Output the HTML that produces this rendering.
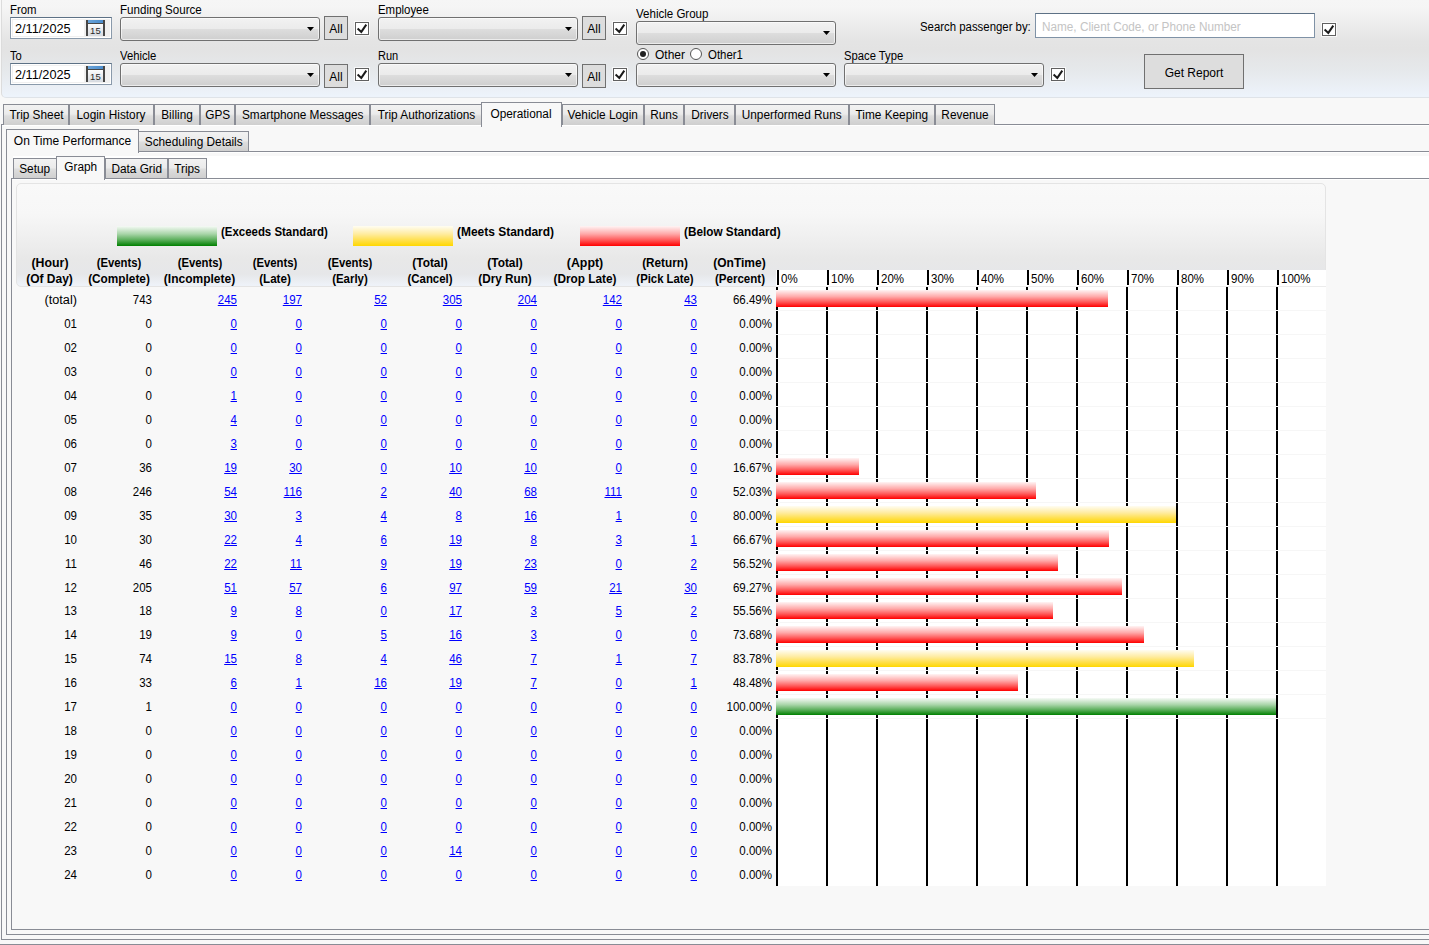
<!DOCTYPE html><html><head><meta charset="utf-8"><style>
*{margin:0;padding:0;box-sizing:content-box;}
html,body{width:1429px;height:945px;overflow:hidden;background:#f8f8f8;font-family:"Liberation Sans", sans-serif;}
body{position:relative;}
.t{position:absolute;white-space:nowrap;line-height:14px;font-size:12px;}
.cb{position:absolute;border:1px solid #707070;border-radius:3px;background:linear-gradient(#f2f2f2 0%,#ebebeb 48%,#dddddd 52%,#cfcfcf 100%);box-shadow:inset 0 0 0 1px rgba(255,255,255,.6);}
.arr{position:absolute;right:5px;top:9px;}
.allb{position:absolute;width:22px;height:22px;border:1px solid #707070;background:#dddddd;font-size:12px;line-height:24px;text-align:center;}
.chk{position:absolute;width:12px;height:11px;border:1px solid #606060;background:#fff;box-shadow:0 0 0 1px rgba(255,255,255,.7);}
.chk svg{position:absolute;left:0;top:0;}
.db{position:absolute;width:100px;height:20px;border:1px solid #8a9aab;border-top-color:#5d7185;background:#f0f0f0;box-shadow:inset 0 0 0 1px #fff;}
.dbw{position:absolute;left:2px;top:2px;width:71px;height:16px;background:#fff;}
.dbt{position:absolute;left:4px;top:4px;font-size:12px;line-height:14px;transform:scaleX(1.06);transform-origin:left 0;}
.cal{position:absolute;left:75px;top:2px;width:15px;height:16px;border-left:2px solid #474747;border-right:2px solid #474747;background:linear-gradient(#ffffff 20%,#d6dae0);}
.calh{position:absolute;left:0;top:0;width:15px;height:3px;background:linear-gradient(90deg,#6aa3d8,#4a8ccc);border-bottom:1px solid #474747;}
.cald{position:absolute;left:0;top:5px;width:15px;text-align:center;font-size:9.5px;line-height:12px;color:#2a2a2a;letter-spacing:0.3px;}
.rad{position:absolute;width:10px;height:10px;border:1px solid #555;border-radius:50%;background:#fff;}
.dot{position:absolute;left:2px;top:2px;width:6px;height:6px;border-radius:50%;background:#222;}
.sb{position:absolute;border:1px solid #7f92a6;border-top-color:#5d7185;background:#fff;}
.sb span{position:absolute;left:6px;top:6px;font-size:12px;line-height:14px;color:#c4c4c4;white-space:nowrap;transform:scaleX(.98);transform-origin:left 0;}
.gr{position:absolute;border:1px solid #707070;background:#dddddd;text-align:center;line-height:37px;font-size:12px;}
.tab{position:absolute;border:1px solid #898c95;border-bottom:none;background:linear-gradient(#f2f2f2 0%,#ebebeb 45%,#dddddd 55%,#cfcfcf 100%);text-align:center;font-size:12px;line-height:21px;white-space:nowrap;}
.tabs{position:absolute;border:1px solid #898c95;border-bottom:none;background:#f8f8f8;text-align:center;font-size:12px;line-height:21px;white-space:nowrap;}
.bar{position:absolute;}
.tab span,.tabs span{display:inline-block;transform:scaleX(.985);}
.bar.g{background:linear-gradient(#f6faf6 0%,#a8d5a8 40%,#5aae5a 70%,#008000 100%);}
.bar.y{background:linear-gradient(#fffdf2 0%,#ffeca0 40%,#ffe050 70%,#ffd700 100%);}
.bar.r{background:linear-gradient(#fff4f4 0%,#ffa8a8 40%,#ff5a5a 70%,#ff0000 100%);}
u{text-decoration:underline;}
</style></head><body><div style="position:absolute;left:1px;top:0;width:1440px;height:97px;border-left:1px solid #dcdcdc;border-bottom:1px solid #dfe3e8;border-bottom-left-radius:5px;background:linear-gradient(#f6f6f6 0px,#f5f5f5 8px,#e4e4e4 42px,#e3e3e3 50px,#e6e9ec 72px,#edf3fb 96px);"></div>
<div class="t" style="left:10px;top:3.00px;font-size:12px;color:#000;transform:scaleX(0.946);transform-origin:left 0;">From</div>
<div class="db" style="left:10px;top:17px;"><div class="dbw"></div><div class="dbt">2/11/2025</div><div class="cal"><div class="calh"></div><div class="cald">15</div></div></div>
<div class="t" style="left:10px;top:49.00px;font-size:12px;color:#000;transform:scaleX(0.93);transform-origin:left 0;">To</div>
<div class="db" style="left:10px;top:63px;"><div class="dbw"></div><div class="dbt">2/11/2025</div><div class="cal"><div class="calh"></div><div class="cald">15</div></div></div>
<div class="t" style="left:120px;top:3.00px;font-size:12px;color:#000;transform:scaleX(0.965);transform-origin:left 0;">Funding Source</div>
<div class="cb" style="left:120px;top:17px;width:198px;height:22px;"><svg class="arr" width="7" height="4" viewBox="0 0 7 4"><path d="M0 0H7L3.5 4Z" fill="#000"/></svg></div>
<div class="allb" style="left:324px;top:16px;">All</div>
<div class="chk" style="left:355px;top:22px;"><svg width="12" height="11" viewBox="0 0 12 11"><path d="M1.6 5.6 L5.3 8.9 L10.3 1.6" fill="none" stroke="#1a1a1a" stroke-width="2.0"/></svg></div>
<div class="t" style="left:120px;top:49.00px;font-size:12px;color:#000;transform:scaleX(0.94);transform-origin:left 0;">Vehicle</div>
<div class="cb" style="left:120px;top:63px;width:198px;height:22px;"><svg class="arr" width="7" height="4" viewBox="0 0 7 4"><path d="M0 0H7L3.5 4Z" fill="#000"/></svg></div>
<div class="allb" style="left:324px;top:64px;">All</div>
<div class="chk" style="left:355px;top:68px;"><svg width="12" height="11" viewBox="0 0 12 11"><path d="M1.6 5.6 L5.3 8.9 L10.3 1.6" fill="none" stroke="#1a1a1a" stroke-width="2.0"/></svg></div>
<div class="t" style="left:378px;top:3.00px;font-size:12px;color:#000;transform:scaleX(0.952);transform-origin:left 0;">Employee</div>
<div class="cb" style="left:378px;top:17px;width:198px;height:22px;"><svg class="arr" width="7" height="4" viewBox="0 0 7 4"><path d="M0 0H7L3.5 4Z" fill="#000"/></svg></div>
<div class="allb" style="left:582px;top:16px;">All</div>
<div class="chk" style="left:613px;top:22px;"><svg width="12" height="11" viewBox="0 0 12 11"><path d="M1.6 5.6 L5.3 8.9 L10.3 1.6" fill="none" stroke="#1a1a1a" stroke-width="2.0"/></svg></div>
<div class="t" style="left:378px;top:49.00px;font-size:12px;color:#000;transform:scaleX(0.92);transform-origin:left 0;">Run</div>
<div class="cb" style="left:378px;top:63px;width:198px;height:22px;"><svg class="arr" width="7" height="4" viewBox="0 0 7 4"><path d="M0 0H7L3.5 4Z" fill="#000"/></svg></div>
<div class="allb" style="left:582px;top:64px;">All</div>
<div class="chk" style="left:613px;top:68px;"><svg width="12" height="11" viewBox="0 0 12 11"><path d="M1.6 5.6 L5.3 8.9 L10.3 1.6" fill="none" stroke="#1a1a1a" stroke-width="2.0"/></svg></div>
<div class="t" style="left:636px;top:7.00px;font-size:12px;color:#000;transform:scaleX(0.961);transform-origin:left 0;">Vehicle Group</div>
<div class="cb" style="left:636px;top:21px;width:198px;height:22px;"><svg class="arr" width="7" height="4" viewBox="0 0 7 4"><path d="M0 0H7L3.5 4Z" fill="#000"/></svg></div>
<div class="rad" style="left:637px;top:48px;"><div class="dot"></div></div>
<div class="t" style="left:655px;top:47.60px;font-size:12px;color:#000;">Other</div>
<div class="rad" style="left:690px;top:48px;"></div>
<div class="t" style="left:708px;top:47.60px;font-size:12px;color:#000;transform:scaleX(0.951);transform-origin:left 0;">Other1</div>
<div class="cb" style="left:636px;top:63px;width:198px;height:22px;"><svg class="arr" width="7" height="4" viewBox="0 0 7 4"><path d="M0 0H7L3.5 4Z" fill="#000"/></svg></div>
<div class="t" style="left:844px;top:49.00px;font-size:12px;color:#000;transform:scaleX(0.937);transform-origin:left 0;">Space Type</div>
<div class="cb" style="left:844px;top:63px;width:198px;height:22px;"><svg class="arr" width="7" height="4" viewBox="0 0 7 4"><path d="M0 0H7L3.5 4Z" fill="#000"/></svg></div>
<div class="chk" style="left:1051px;top:68px;"><svg width="12" height="11" viewBox="0 0 12 11"><path d="M1.6 5.6 L5.3 8.9 L10.3 1.6" fill="none" stroke="#1a1a1a" stroke-width="2.0"/></svg></div>
<div class="t" style="left:920px;top:19.60px;font-size:12px;color:#000;transform:scaleX(0.949);transform-origin:left 0;">Search passenger by:</div>
<div class="sb" style="left:1035px;top:13px;width:278px;height:23px;"><span>Name, Client Code, or Phone Number</span></div>
<div class="chk" style="left:1322px;top:23px;"><svg width="12" height="11" viewBox="0 0 12 11"><path d="M1.6 5.6 L5.3 8.9 L10.3 1.6" fill="none" stroke="#1a1a1a" stroke-width="2.0"/></svg></div>
<div class="gr" style="left:1144px;top:54px;width:98px;height:33px;">Get Report</div>
<div style="position:absolute;left:0;top:944px;width:1429px;height:1px;background:#898c95;"></div>
<div style="position:absolute;left:1px;top:124px;width:1440px;height:814px;border:1px solid #898c95;border-right:none;background:#f8f8f8;"></div>
<div style="position:absolute;left:2px;top:125px;width:1440px;height:1px;background:#fff;"></div>
<div class="tab" style="left:3px;top:104px;width:64px;height:20px;"><span>Trip Sheet</span></div>
<div class="tab" style="left:69px;top:104px;width:83px;height:20px;"><span>Login History</span></div>
<div class="tab" style="left:154px;top:104px;width:44px;height:20px;"><span>Billing</span></div>
<div class="tab" style="left:200px;top:104px;width:33px;height:20px;"><span>GPS</span></div>
<div class="tab" style="left:235px;top:104px;width:133px;height:20px;"><span>Smartphone Messages</span></div>
<div class="tab" style="left:370px;top:104px;width:110px;height:20px;"><span>Trip Authorizations</span></div>
<div class="tab" style="left:562px;top:104px;width:80px;height:20px;"><span>Vehicle Login</span></div>
<div class="tab" style="left:644px;top:104px;width:38px;height:20px;"><span>Runs</span></div>
<div class="tab" style="left:684px;top:104px;width:49px;height:20px;"><span>Drivers</span></div>
<div class="tab" style="left:735px;top:104px;width:112px;height:20px;"><span>Unperformed Runs</span></div>
<div class="tab" style="left:849px;top:104px;width:84px;height:20px;"><span>Time Keeping</span></div>
<div class="tab" style="left:935px;top:104px;width:58px;height:20px;"><span>Revenue</span></div>
<div class="tabs" style="left:481px;top:102px;width:79px;height:23px;padding-top:1px;"><span>Operational</span></div>
<div style="position:absolute;left:6px;top:151px;width:1440px;height:782px;border:1px solid #898c95;border-right:none;background:#f8f8f8;"></div>
<div style="position:absolute;left:7px;top:152px;width:1440px;height:1px;background:#fff;"></div>
<div class="tab" style="left:138px;top:131px;width:109px;height:19px;"><span>Scheduling Details</span></div>
<div class="tabs" style="left:6px;top:129px;width:131px;height:22px;padding-top:1px;"><span style="transform:none">On Time Performance</span></div>
<div style="position:absolute;left:13px;top:156px;width:1440px;height:22px;background:#fff;"></div>
<div style="position:absolute;left:11px;top:178px;width:1440px;height:750px;border:1px solid #898c95;border-right:none;background:#f8f8f8;"></div>
<div style="position:absolute;left:12px;top:179px;width:1440px;height:1px;background:#fff;"></div>
<div class="tab" style="left:13px;top:158px;width:42px;height:19px;"><span>Setup</span></div>
<div class="tab" style="left:105px;top:158px;width:61px;height:19px;"><span>Data Grid</span></div>
<div class="tab" style="left:168px;top:158px;width:37px;height:19px;"><span>Trips</span></div>
<div class="tabs" style="left:56px;top:156px;width:47px;height:23px;"><span>Graph</span></div>
<div style="position:absolute;left:16px;top:183px;width:1308px;height:102px;border:1px solid #e4e4e4;border-radius:5px;background:linear-gradient(#f9f9f9 0px,#f7f7f7 30px,#e8e8e8 75px,#e6e7e9 90px,#eef2f8 101px);"></div>
<div class="bar g" style="left:117px;top:226px;width:100px;height:20px;"></div>
<div class="t" style="left:221px;top:225.40px;font-size:12px;font-weight:bold;color:#000;transform:scaleX(0.953);transform-origin:left 0;">(Exceeds Standard)</div>
<div class="bar y" style="left:353px;top:226px;width:100px;height:20px;"></div>
<div class="t" style="left:457px;top:225.40px;font-size:12px;font-weight:bold;color:#000;transform:scaleX(0.997);transform-origin:left 0;">(Meets Standard)</div>
<div class="bar r" style="left:580px;top:226px;width:100px;height:20px;"></div>
<div class="t" style="left:684px;top:225.40px;font-size:12px;font-weight:bold;color:#000;transform:scaleX(0.98);transform-origin:left 0;">(Below Standard)</div>
<div class="t" style="left:-10.5px;width:120px;text-align:center;top:256.30px;font-size:12px;font-weight:bold;color:#000;transform:scaleX(1.028);transform-origin:center 0;">(Hour)</div>
<div class="t" style="left:-10.5px;width:120px;text-align:center;top:271.80px;font-size:12px;font-weight:bold;color:#000;">(Of Day)</div>
<div class="t" style="left:59.0px;width:120px;text-align:center;top:256.30px;font-size:12px;font-weight:bold;color:#000;transform:scaleX(0.943);transform-origin:center 0;">(Events)</div>
<div class="t" style="left:59.0px;width:120px;text-align:center;top:271.80px;font-size:12px;font-weight:bold;color:#000;transform:scaleX(0.984);transform-origin:center 0;">(Complete)</div>
<div class="t" style="left:139.5px;width:120px;text-align:center;top:256.30px;font-size:12px;font-weight:bold;color:#000;transform:scaleX(0.943);transform-origin:center 0;">(Events)</div>
<div class="t" style="left:139.5px;width:120px;text-align:center;top:271.80px;font-size:12px;font-weight:bold;color:#000;">(Incomplete)</div>
<div class="t" style="left:214.5px;width:120px;text-align:center;top:256.30px;font-size:12px;font-weight:bold;color:#000;transform:scaleX(0.943);transform-origin:center 0;">(Events)</div>
<div class="t" style="left:214.5px;width:120px;text-align:center;top:271.80px;font-size:12px;font-weight:bold;color:#000;transform:scaleX(0.97);transform-origin:center 0;">(Late)</div>
<div class="t" style="left:289.5px;width:120px;text-align:center;top:256.30px;font-size:12px;font-weight:bold;color:#000;transform:scaleX(0.943);transform-origin:center 0;">(Events)</div>
<div class="t" style="left:289.5px;width:120px;text-align:center;top:271.80px;font-size:12px;font-weight:bold;color:#000;transform:scaleX(0.954);transform-origin:center 0;">(Early)</div>
<div class="t" style="left:369.5px;width:120px;text-align:center;top:256.30px;font-size:12px;font-weight:bold;color:#000;transform:scaleX(0.989);transform-origin:center 0;">(Total)</div>
<div class="t" style="left:369.5px;width:120px;text-align:center;top:271.80px;font-size:12px;font-weight:bold;color:#000;transform:scaleX(0.951);transform-origin:center 0;">(Cancel)</div>
<div class="t" style="left:444.5px;width:120px;text-align:center;top:256.30px;font-size:12px;font-weight:bold;color:#000;transform:scaleX(0.989);transform-origin:center 0;">(Total)</div>
<div class="t" style="left:444.5px;width:120px;text-align:center;top:271.80px;font-size:12px;font-weight:bold;color:#000;transform:scaleX(0.978);transform-origin:center 0;">(Dry Run)</div>
<div class="t" style="left:524.6px;width:120px;text-align:center;top:256.30px;font-size:12px;font-weight:bold;color:#000;transform:scaleX(1.029);transform-origin:center 0;">(Appt)</div>
<div class="t" style="left:524.6px;width:120px;text-align:center;top:271.80px;font-size:12px;font-weight:bold;color:#000;transform:scaleX(0.984);transform-origin:center 0;">(Drop Late)</div>
<div class="t" style="left:604.5px;width:120px;text-align:center;top:256.30px;font-size:12px;font-weight:bold;color:#000;transform:scaleX(0.979);transform-origin:center 0;">(Return)</div>
<div class="t" style="left:604.5px;width:120px;text-align:center;top:271.80px;font-size:12px;font-weight:bold;color:#000;transform:scaleX(0.944);transform-origin:center 0;">(Pick Late)</div>
<div class="t" style="left:679.5px;width:120px;text-align:center;top:256.30px;font-size:12px;font-weight:bold;color:#000;">(OnTime)</div>
<div class="t" style="left:679.5px;width:120px;text-align:center;top:271.80px;font-size:12px;font-weight:bold;color:#000;transform:scaleX(0.962);transform-origin:center 0;">(Percent)</div>
<div style="position:absolute;left:776px;top:270px;width:550px;height:16px;background:#fff;"></div>
<div style="position:absolute;left:776px;top:286px;width:550px;height:1px;background:#ececec;"></div>
<div style="position:absolute;left:777px;top:270px;width:2px;height:15px;background:#000;"></div>
<div class="t" style="left:781px;top:271.50px;font-size:12px;color:#000;transform:scaleX(0.96);transform-origin:left 0;">0%</div>
<div style="position:absolute;left:827px;top:270px;width:2px;height:15px;background:#000;"></div>
<div class="t" style="left:831px;top:271.50px;font-size:12px;color:#000;transform:scaleX(0.96);transform-origin:left 0;">10%</div>
<div style="position:absolute;left:877px;top:270px;width:2px;height:15px;background:#000;"></div>
<div class="t" style="left:881px;top:271.50px;font-size:12px;color:#000;transform:scaleX(0.96);transform-origin:left 0;">20%</div>
<div style="position:absolute;left:927px;top:270px;width:2px;height:15px;background:#000;"></div>
<div class="t" style="left:931px;top:271.50px;font-size:12px;color:#000;transform:scaleX(0.96);transform-origin:left 0;">30%</div>
<div style="position:absolute;left:977px;top:270px;width:2px;height:15px;background:#000;"></div>
<div class="t" style="left:981px;top:271.50px;font-size:12px;color:#000;transform:scaleX(0.96);transform-origin:left 0;">40%</div>
<div style="position:absolute;left:1027px;top:270px;width:2px;height:15px;background:#000;"></div>
<div class="t" style="left:1031px;top:271.50px;font-size:12px;color:#000;transform:scaleX(0.96);transform-origin:left 0;">50%</div>
<div style="position:absolute;left:1077px;top:270px;width:2px;height:15px;background:#000;"></div>
<div class="t" style="left:1081px;top:271.50px;font-size:12px;color:#000;transform:scaleX(0.96);transform-origin:left 0;">60%</div>
<div style="position:absolute;left:1127px;top:270px;width:2px;height:15px;background:#000;"></div>
<div class="t" style="left:1131px;top:271.50px;font-size:12px;color:#000;transform:scaleX(0.96);transform-origin:left 0;">70%</div>
<div style="position:absolute;left:1177px;top:270px;width:2px;height:15px;background:#000;"></div>
<div class="t" style="left:1181px;top:271.50px;font-size:12px;color:#000;transform:scaleX(0.96);transform-origin:left 0;">80%</div>
<div style="position:absolute;left:1227px;top:270px;width:2px;height:15px;background:#000;"></div>
<div class="t" style="left:1231px;top:271.50px;font-size:12px;color:#000;transform:scaleX(0.96);transform-origin:left 0;">90%</div>
<div style="position:absolute;left:1277px;top:270px;width:2px;height:15px;background:#000;"></div>
<div class="t" style="left:1281px;top:271.50px;font-size:12px;color:#000;transform:scaleX(0.96);transform-origin:left 0;">100%</div>
<div style="position:absolute;left:776px;top:287px;width:550px;height:599px;background:#fff;"></div>
<div style="position:absolute;left:776px;top:287px;width:2px;height:599px;background:#000;"></div>
<div style="position:absolute;left:826px;top:287px;width:2px;height:599px;background:#000;"></div>
<div style="position:absolute;left:876px;top:287px;width:2px;height:599px;background:#000;"></div>
<div style="position:absolute;left:926px;top:287px;width:2px;height:599px;background:#000;"></div>
<div style="position:absolute;left:976px;top:287px;width:2px;height:599px;background:#000;"></div>
<div style="position:absolute;left:1026px;top:287px;width:2px;height:599px;background:#000;"></div>
<div style="position:absolute;left:1076px;top:287px;width:2px;height:599px;background:#000;"></div>
<div style="position:absolute;left:1126px;top:287px;width:2px;height:599px;background:#000;"></div>
<div style="position:absolute;left:1176px;top:287px;width:2px;height:599px;background:#000;"></div>
<div style="position:absolute;left:1226px;top:287px;width:2px;height:599px;background:#000;"></div>
<div style="position:absolute;left:1276px;top:287px;width:2px;height:599px;background:#000;"></div>
<div style="position:absolute;left:776px;top:310px;width:550px;height:1px;background:#f6f6f6;"></div>
<div style="position:absolute;left:776px;top:334px;width:550px;height:1px;background:#f6f6f6;"></div>
<div style="position:absolute;left:776px;top:358px;width:550px;height:1px;background:#f6f6f6;"></div>
<div style="position:absolute;left:776px;top:382px;width:550px;height:1px;background:#f6f6f6;"></div>
<div style="position:absolute;left:776px;top:406px;width:550px;height:1px;background:#f6f6f6;"></div>
<div style="position:absolute;left:776px;top:430px;width:550px;height:1px;background:#f6f6f6;"></div>
<div style="position:absolute;left:776px;top:454px;width:550px;height:1px;background:#f6f6f6;"></div>
<div style="position:absolute;left:776px;top:478px;width:550px;height:1px;background:#f6f6f6;"></div>
<div style="position:absolute;left:776px;top:502px;width:550px;height:1px;background:#f6f6f6;"></div>
<div style="position:absolute;left:776px;top:526px;width:550px;height:1px;background:#f6f6f6;"></div>
<div style="position:absolute;left:776px;top:550px;width:550px;height:1px;background:#f6f6f6;"></div>
<div style="position:absolute;left:776px;top:574px;width:550px;height:1px;background:#f6f6f6;"></div>
<div style="position:absolute;left:776px;top:598px;width:550px;height:1px;background:#f6f6f6;"></div>
<div style="position:absolute;left:776px;top:622px;width:550px;height:1px;background:#f6f6f6;"></div>
<div style="position:absolute;left:776px;top:646px;width:550px;height:1px;background:#f6f6f6;"></div>
<div style="position:absolute;left:776px;top:670px;width:550px;height:1px;background:#f6f6f6;"></div>
<div style="position:absolute;left:776px;top:694px;width:550px;height:1px;background:#f6f6f6;"></div>
<div style="position:absolute;left:776px;top:718px;width:550px;height:1px;background:#f6f6f6;"></div>
<div class="t" style="left:-3px;width:80px;text-align:right;top:293.00px;font-size:12px;color:#000;transform:scaleX(1.06);transform-origin:right 0;">(total)</div>
<div class="t" style="left:92px;width:60px;text-align:right;top:293.00px;font-size:12px;color:#000;transform:scaleX(0.96);transform-origin:right 0;">743</div>
<div class="t" style="left:177px;width:60px;text-align:right;top:293.00px;font-size:12px;color:#0000ff;transform:scaleX(0.96);transform-origin:right 0;"><u>245</u></div>
<div class="t" style="left:242px;width:60px;text-align:right;top:293.00px;font-size:12px;color:#0000ff;transform:scaleX(0.96);transform-origin:right 0;"><u>197</u></div>
<div class="t" style="left:327px;width:60px;text-align:right;top:293.00px;font-size:12px;color:#0000ff;transform:scaleX(0.96);transform-origin:right 0;"><u>52</u></div>
<div class="t" style="left:402px;width:60px;text-align:right;top:293.00px;font-size:12px;color:#0000ff;transform:scaleX(0.96);transform-origin:right 0;"><u>305</u></div>
<div class="t" style="left:477px;width:60px;text-align:right;top:293.00px;font-size:12px;color:#0000ff;transform:scaleX(0.96);transform-origin:right 0;"><u>204</u></div>
<div class="t" style="left:562px;width:60px;text-align:right;top:293.00px;font-size:12px;color:#0000ff;transform:scaleX(0.96);transform-origin:right 0;"><u>142</u></div>
<div class="t" style="left:637px;width:60px;text-align:right;top:293.00px;font-size:12px;color:#0000ff;transform:scaleX(0.96);transform-origin:right 0;"><u>43</u></div>
<div class="t" style="left:712px;width:60px;text-align:right;top:293.00px;font-size:12px;color:#000;transform:scaleX(0.96);transform-origin:right 0;">66.49%</div>
<div class="bar r" style="position:absolute;left:776px;top:290px;width:332px;height:17px;"></div>
<div class="t" style="left:-3px;width:80px;text-align:right;top:317.00px;font-size:12px;color:#000;transform:scaleX(0.96);transform-origin:right 0;">01</div>
<div class="t" style="left:92px;width:60px;text-align:right;top:317.00px;font-size:12px;color:#000;transform:scaleX(0.96);transform-origin:right 0;">0</div>
<div class="t" style="left:177px;width:60px;text-align:right;top:317.00px;font-size:12px;color:#0000ff;transform:scaleX(0.96);transform-origin:right 0;"><u>0</u></div>
<div class="t" style="left:242px;width:60px;text-align:right;top:317.00px;font-size:12px;color:#0000ff;transform:scaleX(0.96);transform-origin:right 0;"><u>0</u></div>
<div class="t" style="left:327px;width:60px;text-align:right;top:317.00px;font-size:12px;color:#0000ff;transform:scaleX(0.96);transform-origin:right 0;"><u>0</u></div>
<div class="t" style="left:402px;width:60px;text-align:right;top:317.00px;font-size:12px;color:#0000ff;transform:scaleX(0.96);transform-origin:right 0;"><u>0</u></div>
<div class="t" style="left:477px;width:60px;text-align:right;top:317.00px;font-size:12px;color:#0000ff;transform:scaleX(0.96);transform-origin:right 0;"><u>0</u></div>
<div class="t" style="left:562px;width:60px;text-align:right;top:317.00px;font-size:12px;color:#0000ff;transform:scaleX(0.96);transform-origin:right 0;"><u>0</u></div>
<div class="t" style="left:637px;width:60px;text-align:right;top:317.00px;font-size:12px;color:#0000ff;transform:scaleX(0.96);transform-origin:right 0;"><u>0</u></div>
<div class="t" style="left:712px;width:60px;text-align:right;top:317.00px;font-size:12px;color:#000;transform:scaleX(0.96);transform-origin:right 0;">0.00%</div>
<div class="t" style="left:-3px;width:80px;text-align:right;top:341.00px;font-size:12px;color:#000;transform:scaleX(0.96);transform-origin:right 0;">02</div>
<div class="t" style="left:92px;width:60px;text-align:right;top:341.00px;font-size:12px;color:#000;transform:scaleX(0.96);transform-origin:right 0;">0</div>
<div class="t" style="left:177px;width:60px;text-align:right;top:341.00px;font-size:12px;color:#0000ff;transform:scaleX(0.96);transform-origin:right 0;"><u>0</u></div>
<div class="t" style="left:242px;width:60px;text-align:right;top:341.00px;font-size:12px;color:#0000ff;transform:scaleX(0.96);transform-origin:right 0;"><u>0</u></div>
<div class="t" style="left:327px;width:60px;text-align:right;top:341.00px;font-size:12px;color:#0000ff;transform:scaleX(0.96);transform-origin:right 0;"><u>0</u></div>
<div class="t" style="left:402px;width:60px;text-align:right;top:341.00px;font-size:12px;color:#0000ff;transform:scaleX(0.96);transform-origin:right 0;"><u>0</u></div>
<div class="t" style="left:477px;width:60px;text-align:right;top:341.00px;font-size:12px;color:#0000ff;transform:scaleX(0.96);transform-origin:right 0;"><u>0</u></div>
<div class="t" style="left:562px;width:60px;text-align:right;top:341.00px;font-size:12px;color:#0000ff;transform:scaleX(0.96);transform-origin:right 0;"><u>0</u></div>
<div class="t" style="left:637px;width:60px;text-align:right;top:341.00px;font-size:12px;color:#0000ff;transform:scaleX(0.96);transform-origin:right 0;"><u>0</u></div>
<div class="t" style="left:712px;width:60px;text-align:right;top:341.00px;font-size:12px;color:#000;transform:scaleX(0.96);transform-origin:right 0;">0.00%</div>
<div class="t" style="left:-3px;width:80px;text-align:right;top:365.00px;font-size:12px;color:#000;transform:scaleX(0.96);transform-origin:right 0;">03</div>
<div class="t" style="left:92px;width:60px;text-align:right;top:365.00px;font-size:12px;color:#000;transform:scaleX(0.96);transform-origin:right 0;">0</div>
<div class="t" style="left:177px;width:60px;text-align:right;top:365.00px;font-size:12px;color:#0000ff;transform:scaleX(0.96);transform-origin:right 0;"><u>0</u></div>
<div class="t" style="left:242px;width:60px;text-align:right;top:365.00px;font-size:12px;color:#0000ff;transform:scaleX(0.96);transform-origin:right 0;"><u>0</u></div>
<div class="t" style="left:327px;width:60px;text-align:right;top:365.00px;font-size:12px;color:#0000ff;transform:scaleX(0.96);transform-origin:right 0;"><u>0</u></div>
<div class="t" style="left:402px;width:60px;text-align:right;top:365.00px;font-size:12px;color:#0000ff;transform:scaleX(0.96);transform-origin:right 0;"><u>0</u></div>
<div class="t" style="left:477px;width:60px;text-align:right;top:365.00px;font-size:12px;color:#0000ff;transform:scaleX(0.96);transform-origin:right 0;"><u>0</u></div>
<div class="t" style="left:562px;width:60px;text-align:right;top:365.00px;font-size:12px;color:#0000ff;transform:scaleX(0.96);transform-origin:right 0;"><u>0</u></div>
<div class="t" style="left:637px;width:60px;text-align:right;top:365.00px;font-size:12px;color:#0000ff;transform:scaleX(0.96);transform-origin:right 0;"><u>0</u></div>
<div class="t" style="left:712px;width:60px;text-align:right;top:365.00px;font-size:12px;color:#000;transform:scaleX(0.96);transform-origin:right 0;">0.00%</div>
<div class="t" style="left:-3px;width:80px;text-align:right;top:389.00px;font-size:12px;color:#000;transform:scaleX(0.96);transform-origin:right 0;">04</div>
<div class="t" style="left:92px;width:60px;text-align:right;top:389.00px;font-size:12px;color:#000;transform:scaleX(0.96);transform-origin:right 0;">0</div>
<div class="t" style="left:177px;width:60px;text-align:right;top:389.00px;font-size:12px;color:#0000ff;transform:scaleX(0.96);transform-origin:right 0;"><u>1</u></div>
<div class="t" style="left:242px;width:60px;text-align:right;top:389.00px;font-size:12px;color:#0000ff;transform:scaleX(0.96);transform-origin:right 0;"><u>0</u></div>
<div class="t" style="left:327px;width:60px;text-align:right;top:389.00px;font-size:12px;color:#0000ff;transform:scaleX(0.96);transform-origin:right 0;"><u>0</u></div>
<div class="t" style="left:402px;width:60px;text-align:right;top:389.00px;font-size:12px;color:#0000ff;transform:scaleX(0.96);transform-origin:right 0;"><u>0</u></div>
<div class="t" style="left:477px;width:60px;text-align:right;top:389.00px;font-size:12px;color:#0000ff;transform:scaleX(0.96);transform-origin:right 0;"><u>0</u></div>
<div class="t" style="left:562px;width:60px;text-align:right;top:389.00px;font-size:12px;color:#0000ff;transform:scaleX(0.96);transform-origin:right 0;"><u>0</u></div>
<div class="t" style="left:637px;width:60px;text-align:right;top:389.00px;font-size:12px;color:#0000ff;transform:scaleX(0.96);transform-origin:right 0;"><u>0</u></div>
<div class="t" style="left:712px;width:60px;text-align:right;top:389.00px;font-size:12px;color:#000;transform:scaleX(0.96);transform-origin:right 0;">0.00%</div>
<div class="t" style="left:-3px;width:80px;text-align:right;top:413.00px;font-size:12px;color:#000;transform:scaleX(0.96);transform-origin:right 0;">05</div>
<div class="t" style="left:92px;width:60px;text-align:right;top:413.00px;font-size:12px;color:#000;transform:scaleX(0.96);transform-origin:right 0;">0</div>
<div class="t" style="left:177px;width:60px;text-align:right;top:413.00px;font-size:12px;color:#0000ff;transform:scaleX(0.96);transform-origin:right 0;"><u>4</u></div>
<div class="t" style="left:242px;width:60px;text-align:right;top:413.00px;font-size:12px;color:#0000ff;transform:scaleX(0.96);transform-origin:right 0;"><u>0</u></div>
<div class="t" style="left:327px;width:60px;text-align:right;top:413.00px;font-size:12px;color:#0000ff;transform:scaleX(0.96);transform-origin:right 0;"><u>0</u></div>
<div class="t" style="left:402px;width:60px;text-align:right;top:413.00px;font-size:12px;color:#0000ff;transform:scaleX(0.96);transform-origin:right 0;"><u>0</u></div>
<div class="t" style="left:477px;width:60px;text-align:right;top:413.00px;font-size:12px;color:#0000ff;transform:scaleX(0.96);transform-origin:right 0;"><u>0</u></div>
<div class="t" style="left:562px;width:60px;text-align:right;top:413.00px;font-size:12px;color:#0000ff;transform:scaleX(0.96);transform-origin:right 0;"><u>0</u></div>
<div class="t" style="left:637px;width:60px;text-align:right;top:413.00px;font-size:12px;color:#0000ff;transform:scaleX(0.96);transform-origin:right 0;"><u>0</u></div>
<div class="t" style="left:712px;width:60px;text-align:right;top:413.00px;font-size:12px;color:#000;transform:scaleX(0.96);transform-origin:right 0;">0.00%</div>
<div class="t" style="left:-3px;width:80px;text-align:right;top:437.00px;font-size:12px;color:#000;transform:scaleX(0.96);transform-origin:right 0;">06</div>
<div class="t" style="left:92px;width:60px;text-align:right;top:437.00px;font-size:12px;color:#000;transform:scaleX(0.96);transform-origin:right 0;">0</div>
<div class="t" style="left:177px;width:60px;text-align:right;top:437.00px;font-size:12px;color:#0000ff;transform:scaleX(0.96);transform-origin:right 0;"><u>3</u></div>
<div class="t" style="left:242px;width:60px;text-align:right;top:437.00px;font-size:12px;color:#0000ff;transform:scaleX(0.96);transform-origin:right 0;"><u>0</u></div>
<div class="t" style="left:327px;width:60px;text-align:right;top:437.00px;font-size:12px;color:#0000ff;transform:scaleX(0.96);transform-origin:right 0;"><u>0</u></div>
<div class="t" style="left:402px;width:60px;text-align:right;top:437.00px;font-size:12px;color:#0000ff;transform:scaleX(0.96);transform-origin:right 0;"><u>0</u></div>
<div class="t" style="left:477px;width:60px;text-align:right;top:437.00px;font-size:12px;color:#0000ff;transform:scaleX(0.96);transform-origin:right 0;"><u>0</u></div>
<div class="t" style="left:562px;width:60px;text-align:right;top:437.00px;font-size:12px;color:#0000ff;transform:scaleX(0.96);transform-origin:right 0;"><u>0</u></div>
<div class="t" style="left:637px;width:60px;text-align:right;top:437.00px;font-size:12px;color:#0000ff;transform:scaleX(0.96);transform-origin:right 0;"><u>0</u></div>
<div class="t" style="left:712px;width:60px;text-align:right;top:437.00px;font-size:12px;color:#000;transform:scaleX(0.96);transform-origin:right 0;">0.00%</div>
<div class="t" style="left:-3px;width:80px;text-align:right;top:461.00px;font-size:12px;color:#000;transform:scaleX(0.96);transform-origin:right 0;">07</div>
<div class="t" style="left:92px;width:60px;text-align:right;top:461.00px;font-size:12px;color:#000;transform:scaleX(0.96);transform-origin:right 0;">36</div>
<div class="t" style="left:177px;width:60px;text-align:right;top:461.00px;font-size:12px;color:#0000ff;transform:scaleX(0.96);transform-origin:right 0;"><u>19</u></div>
<div class="t" style="left:242px;width:60px;text-align:right;top:461.00px;font-size:12px;color:#0000ff;transform:scaleX(0.96);transform-origin:right 0;"><u>30</u></div>
<div class="t" style="left:327px;width:60px;text-align:right;top:461.00px;font-size:12px;color:#0000ff;transform:scaleX(0.96);transform-origin:right 0;"><u>0</u></div>
<div class="t" style="left:402px;width:60px;text-align:right;top:461.00px;font-size:12px;color:#0000ff;transform:scaleX(0.96);transform-origin:right 0;"><u>10</u></div>
<div class="t" style="left:477px;width:60px;text-align:right;top:461.00px;font-size:12px;color:#0000ff;transform:scaleX(0.96);transform-origin:right 0;"><u>10</u></div>
<div class="t" style="left:562px;width:60px;text-align:right;top:461.00px;font-size:12px;color:#0000ff;transform:scaleX(0.96);transform-origin:right 0;"><u>0</u></div>
<div class="t" style="left:637px;width:60px;text-align:right;top:461.00px;font-size:12px;color:#0000ff;transform:scaleX(0.96);transform-origin:right 0;"><u>0</u></div>
<div class="t" style="left:712px;width:60px;text-align:right;top:461.00px;font-size:12px;color:#000;transform:scaleX(0.96);transform-origin:right 0;">16.67%</div>
<div class="bar r" style="position:absolute;left:776px;top:458px;width:83px;height:17px;"></div>
<div class="t" style="left:-3px;width:80px;text-align:right;top:485.00px;font-size:12px;color:#000;transform:scaleX(0.96);transform-origin:right 0;">08</div>
<div class="t" style="left:92px;width:60px;text-align:right;top:485.00px;font-size:12px;color:#000;transform:scaleX(0.96);transform-origin:right 0;">246</div>
<div class="t" style="left:177px;width:60px;text-align:right;top:485.00px;font-size:12px;color:#0000ff;transform:scaleX(0.96);transform-origin:right 0;"><u>54</u></div>
<div class="t" style="left:242px;width:60px;text-align:right;top:485.00px;font-size:12px;color:#0000ff;transform:scaleX(0.96);transform-origin:right 0;"><u>116</u></div>
<div class="t" style="left:327px;width:60px;text-align:right;top:485.00px;font-size:12px;color:#0000ff;transform:scaleX(0.96);transform-origin:right 0;"><u>2</u></div>
<div class="t" style="left:402px;width:60px;text-align:right;top:485.00px;font-size:12px;color:#0000ff;transform:scaleX(0.96);transform-origin:right 0;"><u>40</u></div>
<div class="t" style="left:477px;width:60px;text-align:right;top:485.00px;font-size:12px;color:#0000ff;transform:scaleX(0.96);transform-origin:right 0;"><u>68</u></div>
<div class="t" style="left:562px;width:60px;text-align:right;top:485.00px;font-size:12px;color:#0000ff;transform:scaleX(0.96);transform-origin:right 0;"><u>111</u></div>
<div class="t" style="left:637px;width:60px;text-align:right;top:485.00px;font-size:12px;color:#0000ff;transform:scaleX(0.96);transform-origin:right 0;"><u>0</u></div>
<div class="t" style="left:712px;width:60px;text-align:right;top:485.00px;font-size:12px;color:#000;transform:scaleX(0.96);transform-origin:right 0;">52.03%</div>
<div class="bar r" style="position:absolute;left:776px;top:482px;width:260px;height:17px;"></div>
<div class="t" style="left:-3px;width:80px;text-align:right;top:509.00px;font-size:12px;color:#000;transform:scaleX(0.96);transform-origin:right 0;">09</div>
<div class="t" style="left:92px;width:60px;text-align:right;top:509.00px;font-size:12px;color:#000;transform:scaleX(0.96);transform-origin:right 0;">35</div>
<div class="t" style="left:177px;width:60px;text-align:right;top:509.00px;font-size:12px;color:#0000ff;transform:scaleX(0.96);transform-origin:right 0;"><u>30</u></div>
<div class="t" style="left:242px;width:60px;text-align:right;top:509.00px;font-size:12px;color:#0000ff;transform:scaleX(0.96);transform-origin:right 0;"><u>3</u></div>
<div class="t" style="left:327px;width:60px;text-align:right;top:509.00px;font-size:12px;color:#0000ff;transform:scaleX(0.96);transform-origin:right 0;"><u>4</u></div>
<div class="t" style="left:402px;width:60px;text-align:right;top:509.00px;font-size:12px;color:#0000ff;transform:scaleX(0.96);transform-origin:right 0;"><u>8</u></div>
<div class="t" style="left:477px;width:60px;text-align:right;top:509.00px;font-size:12px;color:#0000ff;transform:scaleX(0.96);transform-origin:right 0;"><u>16</u></div>
<div class="t" style="left:562px;width:60px;text-align:right;top:509.00px;font-size:12px;color:#0000ff;transform:scaleX(0.96);transform-origin:right 0;"><u>1</u></div>
<div class="t" style="left:637px;width:60px;text-align:right;top:509.00px;font-size:12px;color:#0000ff;transform:scaleX(0.96);transform-origin:right 0;"><u>0</u></div>
<div class="t" style="left:712px;width:60px;text-align:right;top:509.00px;font-size:12px;color:#000;transform:scaleX(0.96);transform-origin:right 0;">80.00%</div>
<div class="bar y" style="position:absolute;left:776px;top:506px;width:400px;height:17px;"></div>
<div class="t" style="left:-3px;width:80px;text-align:right;top:533.00px;font-size:12px;color:#000;transform:scaleX(0.96);transform-origin:right 0;">10</div>
<div class="t" style="left:92px;width:60px;text-align:right;top:533.00px;font-size:12px;color:#000;transform:scaleX(0.96);transform-origin:right 0;">30</div>
<div class="t" style="left:177px;width:60px;text-align:right;top:533.00px;font-size:12px;color:#0000ff;transform:scaleX(0.96);transform-origin:right 0;"><u>22</u></div>
<div class="t" style="left:242px;width:60px;text-align:right;top:533.00px;font-size:12px;color:#0000ff;transform:scaleX(0.96);transform-origin:right 0;"><u>4</u></div>
<div class="t" style="left:327px;width:60px;text-align:right;top:533.00px;font-size:12px;color:#0000ff;transform:scaleX(0.96);transform-origin:right 0;"><u>6</u></div>
<div class="t" style="left:402px;width:60px;text-align:right;top:533.00px;font-size:12px;color:#0000ff;transform:scaleX(0.96);transform-origin:right 0;"><u>19</u></div>
<div class="t" style="left:477px;width:60px;text-align:right;top:533.00px;font-size:12px;color:#0000ff;transform:scaleX(0.96);transform-origin:right 0;"><u>8</u></div>
<div class="t" style="left:562px;width:60px;text-align:right;top:533.00px;font-size:12px;color:#0000ff;transform:scaleX(0.96);transform-origin:right 0;"><u>3</u></div>
<div class="t" style="left:637px;width:60px;text-align:right;top:533.00px;font-size:12px;color:#0000ff;transform:scaleX(0.96);transform-origin:right 0;"><u>1</u></div>
<div class="t" style="left:712px;width:60px;text-align:right;top:533.00px;font-size:12px;color:#000;transform:scaleX(0.96);transform-origin:right 0;">66.67%</div>
<div class="bar r" style="position:absolute;left:776px;top:530px;width:333px;height:17px;"></div>
<div class="t" style="left:-3px;width:80px;text-align:right;top:557.00px;font-size:12px;color:#000;transform:scaleX(0.96);transform-origin:right 0;">11</div>
<div class="t" style="left:92px;width:60px;text-align:right;top:557.00px;font-size:12px;color:#000;transform:scaleX(0.96);transform-origin:right 0;">46</div>
<div class="t" style="left:177px;width:60px;text-align:right;top:557.00px;font-size:12px;color:#0000ff;transform:scaleX(0.96);transform-origin:right 0;"><u>22</u></div>
<div class="t" style="left:242px;width:60px;text-align:right;top:557.00px;font-size:12px;color:#0000ff;transform:scaleX(0.96);transform-origin:right 0;"><u>11</u></div>
<div class="t" style="left:327px;width:60px;text-align:right;top:557.00px;font-size:12px;color:#0000ff;transform:scaleX(0.96);transform-origin:right 0;"><u>9</u></div>
<div class="t" style="left:402px;width:60px;text-align:right;top:557.00px;font-size:12px;color:#0000ff;transform:scaleX(0.96);transform-origin:right 0;"><u>19</u></div>
<div class="t" style="left:477px;width:60px;text-align:right;top:557.00px;font-size:12px;color:#0000ff;transform:scaleX(0.96);transform-origin:right 0;"><u>23</u></div>
<div class="t" style="left:562px;width:60px;text-align:right;top:557.00px;font-size:12px;color:#0000ff;transform:scaleX(0.96);transform-origin:right 0;"><u>0</u></div>
<div class="t" style="left:637px;width:60px;text-align:right;top:557.00px;font-size:12px;color:#0000ff;transform:scaleX(0.96);transform-origin:right 0;"><u>2</u></div>
<div class="t" style="left:712px;width:60px;text-align:right;top:557.00px;font-size:12px;color:#000;transform:scaleX(0.96);transform-origin:right 0;">56.52%</div>
<div class="bar r" style="position:absolute;left:776px;top:554px;width:282px;height:17px;"></div>
<div class="t" style="left:-3px;width:80px;text-align:right;top:581.00px;font-size:12px;color:#000;transform:scaleX(0.96);transform-origin:right 0;">12</div>
<div class="t" style="left:92px;width:60px;text-align:right;top:581.00px;font-size:12px;color:#000;transform:scaleX(0.96);transform-origin:right 0;">205</div>
<div class="t" style="left:177px;width:60px;text-align:right;top:581.00px;font-size:12px;color:#0000ff;transform:scaleX(0.96);transform-origin:right 0;"><u>51</u></div>
<div class="t" style="left:242px;width:60px;text-align:right;top:581.00px;font-size:12px;color:#0000ff;transform:scaleX(0.96);transform-origin:right 0;"><u>57</u></div>
<div class="t" style="left:327px;width:60px;text-align:right;top:581.00px;font-size:12px;color:#0000ff;transform:scaleX(0.96);transform-origin:right 0;"><u>6</u></div>
<div class="t" style="left:402px;width:60px;text-align:right;top:581.00px;font-size:12px;color:#0000ff;transform:scaleX(0.96);transform-origin:right 0;"><u>97</u></div>
<div class="t" style="left:477px;width:60px;text-align:right;top:581.00px;font-size:12px;color:#0000ff;transform:scaleX(0.96);transform-origin:right 0;"><u>59</u></div>
<div class="t" style="left:562px;width:60px;text-align:right;top:581.00px;font-size:12px;color:#0000ff;transform:scaleX(0.96);transform-origin:right 0;"><u>21</u></div>
<div class="t" style="left:637px;width:60px;text-align:right;top:581.00px;font-size:12px;color:#0000ff;transform:scaleX(0.96);transform-origin:right 0;"><u>30</u></div>
<div class="t" style="left:712px;width:60px;text-align:right;top:581.00px;font-size:12px;color:#000;transform:scaleX(0.96);transform-origin:right 0;">69.27%</div>
<div class="bar r" style="position:absolute;left:776px;top:578px;width:346px;height:17px;"></div>
<div class="t" style="left:-3px;width:80px;text-align:right;top:604.00px;font-size:12px;color:#000;transform:scaleX(0.96);transform-origin:right 0;">13</div>
<div class="t" style="left:92px;width:60px;text-align:right;top:604.00px;font-size:12px;color:#000;transform:scaleX(0.96);transform-origin:right 0;">18</div>
<div class="t" style="left:177px;width:60px;text-align:right;top:604.00px;font-size:12px;color:#0000ff;transform:scaleX(0.96);transform-origin:right 0;"><u>9</u></div>
<div class="t" style="left:242px;width:60px;text-align:right;top:604.00px;font-size:12px;color:#0000ff;transform:scaleX(0.96);transform-origin:right 0;"><u>8</u></div>
<div class="t" style="left:327px;width:60px;text-align:right;top:604.00px;font-size:12px;color:#0000ff;transform:scaleX(0.96);transform-origin:right 0;"><u>0</u></div>
<div class="t" style="left:402px;width:60px;text-align:right;top:604.00px;font-size:12px;color:#0000ff;transform:scaleX(0.96);transform-origin:right 0;"><u>17</u></div>
<div class="t" style="left:477px;width:60px;text-align:right;top:604.00px;font-size:12px;color:#0000ff;transform:scaleX(0.96);transform-origin:right 0;"><u>3</u></div>
<div class="t" style="left:562px;width:60px;text-align:right;top:604.00px;font-size:12px;color:#0000ff;transform:scaleX(0.96);transform-origin:right 0;"><u>5</u></div>
<div class="t" style="left:637px;width:60px;text-align:right;top:604.00px;font-size:12px;color:#0000ff;transform:scaleX(0.96);transform-origin:right 0;"><u>2</u></div>
<div class="t" style="left:712px;width:60px;text-align:right;top:604.00px;font-size:12px;color:#000;transform:scaleX(0.96);transform-origin:right 0;">55.56%</div>
<div class="bar r" style="position:absolute;left:776px;top:602px;width:277px;height:17px;"></div>
<div class="t" style="left:-3px;width:80px;text-align:right;top:628.00px;font-size:12px;color:#000;transform:scaleX(0.96);transform-origin:right 0;">14</div>
<div class="t" style="left:92px;width:60px;text-align:right;top:628.00px;font-size:12px;color:#000;transform:scaleX(0.96);transform-origin:right 0;">19</div>
<div class="t" style="left:177px;width:60px;text-align:right;top:628.00px;font-size:12px;color:#0000ff;transform:scaleX(0.96);transform-origin:right 0;"><u>9</u></div>
<div class="t" style="left:242px;width:60px;text-align:right;top:628.00px;font-size:12px;color:#0000ff;transform:scaleX(0.96);transform-origin:right 0;"><u>0</u></div>
<div class="t" style="left:327px;width:60px;text-align:right;top:628.00px;font-size:12px;color:#0000ff;transform:scaleX(0.96);transform-origin:right 0;"><u>5</u></div>
<div class="t" style="left:402px;width:60px;text-align:right;top:628.00px;font-size:12px;color:#0000ff;transform:scaleX(0.96);transform-origin:right 0;"><u>16</u></div>
<div class="t" style="left:477px;width:60px;text-align:right;top:628.00px;font-size:12px;color:#0000ff;transform:scaleX(0.96);transform-origin:right 0;"><u>3</u></div>
<div class="t" style="left:562px;width:60px;text-align:right;top:628.00px;font-size:12px;color:#0000ff;transform:scaleX(0.96);transform-origin:right 0;"><u>0</u></div>
<div class="t" style="left:637px;width:60px;text-align:right;top:628.00px;font-size:12px;color:#0000ff;transform:scaleX(0.96);transform-origin:right 0;"><u>0</u></div>
<div class="t" style="left:712px;width:60px;text-align:right;top:628.00px;font-size:12px;color:#000;transform:scaleX(0.96);transform-origin:right 0;">73.68%</div>
<div class="bar r" style="position:absolute;left:776px;top:626px;width:368px;height:17px;"></div>
<div class="t" style="left:-3px;width:80px;text-align:right;top:652.00px;font-size:12px;color:#000;transform:scaleX(0.96);transform-origin:right 0;">15</div>
<div class="t" style="left:92px;width:60px;text-align:right;top:652.00px;font-size:12px;color:#000;transform:scaleX(0.96);transform-origin:right 0;">74</div>
<div class="t" style="left:177px;width:60px;text-align:right;top:652.00px;font-size:12px;color:#0000ff;transform:scaleX(0.96);transform-origin:right 0;"><u>15</u></div>
<div class="t" style="left:242px;width:60px;text-align:right;top:652.00px;font-size:12px;color:#0000ff;transform:scaleX(0.96);transform-origin:right 0;"><u>8</u></div>
<div class="t" style="left:327px;width:60px;text-align:right;top:652.00px;font-size:12px;color:#0000ff;transform:scaleX(0.96);transform-origin:right 0;"><u>4</u></div>
<div class="t" style="left:402px;width:60px;text-align:right;top:652.00px;font-size:12px;color:#0000ff;transform:scaleX(0.96);transform-origin:right 0;"><u>46</u></div>
<div class="t" style="left:477px;width:60px;text-align:right;top:652.00px;font-size:12px;color:#0000ff;transform:scaleX(0.96);transform-origin:right 0;"><u>7</u></div>
<div class="t" style="left:562px;width:60px;text-align:right;top:652.00px;font-size:12px;color:#0000ff;transform:scaleX(0.96);transform-origin:right 0;"><u>1</u></div>
<div class="t" style="left:637px;width:60px;text-align:right;top:652.00px;font-size:12px;color:#0000ff;transform:scaleX(0.96);transform-origin:right 0;"><u>7</u></div>
<div class="t" style="left:712px;width:60px;text-align:right;top:652.00px;font-size:12px;color:#000;transform:scaleX(0.96);transform-origin:right 0;">83.78%</div>
<div class="bar y" style="position:absolute;left:776px;top:650px;width:418px;height:17px;"></div>
<div class="t" style="left:-3px;width:80px;text-align:right;top:676.00px;font-size:12px;color:#000;transform:scaleX(0.96);transform-origin:right 0;">16</div>
<div class="t" style="left:92px;width:60px;text-align:right;top:676.00px;font-size:12px;color:#000;transform:scaleX(0.96);transform-origin:right 0;">33</div>
<div class="t" style="left:177px;width:60px;text-align:right;top:676.00px;font-size:12px;color:#0000ff;transform:scaleX(0.96);transform-origin:right 0;"><u>6</u></div>
<div class="t" style="left:242px;width:60px;text-align:right;top:676.00px;font-size:12px;color:#0000ff;transform:scaleX(0.96);transform-origin:right 0;"><u>1</u></div>
<div class="t" style="left:327px;width:60px;text-align:right;top:676.00px;font-size:12px;color:#0000ff;transform:scaleX(0.96);transform-origin:right 0;"><u>16</u></div>
<div class="t" style="left:402px;width:60px;text-align:right;top:676.00px;font-size:12px;color:#0000ff;transform:scaleX(0.96);transform-origin:right 0;"><u>19</u></div>
<div class="t" style="left:477px;width:60px;text-align:right;top:676.00px;font-size:12px;color:#0000ff;transform:scaleX(0.96);transform-origin:right 0;"><u>7</u></div>
<div class="t" style="left:562px;width:60px;text-align:right;top:676.00px;font-size:12px;color:#0000ff;transform:scaleX(0.96);transform-origin:right 0;"><u>0</u></div>
<div class="t" style="left:637px;width:60px;text-align:right;top:676.00px;font-size:12px;color:#0000ff;transform:scaleX(0.96);transform-origin:right 0;"><u>1</u></div>
<div class="t" style="left:712px;width:60px;text-align:right;top:676.00px;font-size:12px;color:#000;transform:scaleX(0.96);transform-origin:right 0;">48.48%</div>
<div class="bar r" style="position:absolute;left:776px;top:674px;width:242px;height:17px;"></div>
<div class="t" style="left:-3px;width:80px;text-align:right;top:700.00px;font-size:12px;color:#000;transform:scaleX(0.96);transform-origin:right 0;">17</div>
<div class="t" style="left:92px;width:60px;text-align:right;top:700.00px;font-size:12px;color:#000;transform:scaleX(0.96);transform-origin:right 0;">1</div>
<div class="t" style="left:177px;width:60px;text-align:right;top:700.00px;font-size:12px;color:#0000ff;transform:scaleX(0.96);transform-origin:right 0;"><u>0</u></div>
<div class="t" style="left:242px;width:60px;text-align:right;top:700.00px;font-size:12px;color:#0000ff;transform:scaleX(0.96);transform-origin:right 0;"><u>0</u></div>
<div class="t" style="left:327px;width:60px;text-align:right;top:700.00px;font-size:12px;color:#0000ff;transform:scaleX(0.96);transform-origin:right 0;"><u>0</u></div>
<div class="t" style="left:402px;width:60px;text-align:right;top:700.00px;font-size:12px;color:#0000ff;transform:scaleX(0.96);transform-origin:right 0;"><u>0</u></div>
<div class="t" style="left:477px;width:60px;text-align:right;top:700.00px;font-size:12px;color:#0000ff;transform:scaleX(0.96);transform-origin:right 0;"><u>0</u></div>
<div class="t" style="left:562px;width:60px;text-align:right;top:700.00px;font-size:12px;color:#0000ff;transform:scaleX(0.96);transform-origin:right 0;"><u>0</u></div>
<div class="t" style="left:637px;width:60px;text-align:right;top:700.00px;font-size:12px;color:#0000ff;transform:scaleX(0.96);transform-origin:right 0;"><u>0</u></div>
<div class="t" style="left:712px;width:60px;text-align:right;top:700.00px;font-size:12px;color:#000;transform:scaleX(0.96);transform-origin:right 0;">100.00%</div>
<div class="bar g" style="position:absolute;left:776px;top:698px;width:500px;height:17px;"></div>
<div class="t" style="left:-3px;width:80px;text-align:right;top:724.00px;font-size:12px;color:#000;transform:scaleX(0.96);transform-origin:right 0;">18</div>
<div class="t" style="left:92px;width:60px;text-align:right;top:724.00px;font-size:12px;color:#000;transform:scaleX(0.96);transform-origin:right 0;">0</div>
<div class="t" style="left:177px;width:60px;text-align:right;top:724.00px;font-size:12px;color:#0000ff;transform:scaleX(0.96);transform-origin:right 0;"><u>0</u></div>
<div class="t" style="left:242px;width:60px;text-align:right;top:724.00px;font-size:12px;color:#0000ff;transform:scaleX(0.96);transform-origin:right 0;"><u>0</u></div>
<div class="t" style="left:327px;width:60px;text-align:right;top:724.00px;font-size:12px;color:#0000ff;transform:scaleX(0.96);transform-origin:right 0;"><u>0</u></div>
<div class="t" style="left:402px;width:60px;text-align:right;top:724.00px;font-size:12px;color:#0000ff;transform:scaleX(0.96);transform-origin:right 0;"><u>0</u></div>
<div class="t" style="left:477px;width:60px;text-align:right;top:724.00px;font-size:12px;color:#0000ff;transform:scaleX(0.96);transform-origin:right 0;"><u>0</u></div>
<div class="t" style="left:562px;width:60px;text-align:right;top:724.00px;font-size:12px;color:#0000ff;transform:scaleX(0.96);transform-origin:right 0;"><u>0</u></div>
<div class="t" style="left:637px;width:60px;text-align:right;top:724.00px;font-size:12px;color:#0000ff;transform:scaleX(0.96);transform-origin:right 0;"><u>0</u></div>
<div class="t" style="left:712px;width:60px;text-align:right;top:724.00px;font-size:12px;color:#000;transform:scaleX(0.96);transform-origin:right 0;">0.00%</div>
<div class="t" style="left:-3px;width:80px;text-align:right;top:748.00px;font-size:12px;color:#000;transform:scaleX(0.96);transform-origin:right 0;">19</div>
<div class="t" style="left:92px;width:60px;text-align:right;top:748.00px;font-size:12px;color:#000;transform:scaleX(0.96);transform-origin:right 0;">0</div>
<div class="t" style="left:177px;width:60px;text-align:right;top:748.00px;font-size:12px;color:#0000ff;transform:scaleX(0.96);transform-origin:right 0;"><u>0</u></div>
<div class="t" style="left:242px;width:60px;text-align:right;top:748.00px;font-size:12px;color:#0000ff;transform:scaleX(0.96);transform-origin:right 0;"><u>0</u></div>
<div class="t" style="left:327px;width:60px;text-align:right;top:748.00px;font-size:12px;color:#0000ff;transform:scaleX(0.96);transform-origin:right 0;"><u>0</u></div>
<div class="t" style="left:402px;width:60px;text-align:right;top:748.00px;font-size:12px;color:#0000ff;transform:scaleX(0.96);transform-origin:right 0;"><u>0</u></div>
<div class="t" style="left:477px;width:60px;text-align:right;top:748.00px;font-size:12px;color:#0000ff;transform:scaleX(0.96);transform-origin:right 0;"><u>0</u></div>
<div class="t" style="left:562px;width:60px;text-align:right;top:748.00px;font-size:12px;color:#0000ff;transform:scaleX(0.96);transform-origin:right 0;"><u>0</u></div>
<div class="t" style="left:637px;width:60px;text-align:right;top:748.00px;font-size:12px;color:#0000ff;transform:scaleX(0.96);transform-origin:right 0;"><u>0</u></div>
<div class="t" style="left:712px;width:60px;text-align:right;top:748.00px;font-size:12px;color:#000;transform:scaleX(0.96);transform-origin:right 0;">0.00%</div>
<div class="t" style="left:-3px;width:80px;text-align:right;top:772.00px;font-size:12px;color:#000;transform:scaleX(0.96);transform-origin:right 0;">20</div>
<div class="t" style="left:92px;width:60px;text-align:right;top:772.00px;font-size:12px;color:#000;transform:scaleX(0.96);transform-origin:right 0;">0</div>
<div class="t" style="left:177px;width:60px;text-align:right;top:772.00px;font-size:12px;color:#0000ff;transform:scaleX(0.96);transform-origin:right 0;"><u>0</u></div>
<div class="t" style="left:242px;width:60px;text-align:right;top:772.00px;font-size:12px;color:#0000ff;transform:scaleX(0.96);transform-origin:right 0;"><u>0</u></div>
<div class="t" style="left:327px;width:60px;text-align:right;top:772.00px;font-size:12px;color:#0000ff;transform:scaleX(0.96);transform-origin:right 0;"><u>0</u></div>
<div class="t" style="left:402px;width:60px;text-align:right;top:772.00px;font-size:12px;color:#0000ff;transform:scaleX(0.96);transform-origin:right 0;"><u>0</u></div>
<div class="t" style="left:477px;width:60px;text-align:right;top:772.00px;font-size:12px;color:#0000ff;transform:scaleX(0.96);transform-origin:right 0;"><u>0</u></div>
<div class="t" style="left:562px;width:60px;text-align:right;top:772.00px;font-size:12px;color:#0000ff;transform:scaleX(0.96);transform-origin:right 0;"><u>0</u></div>
<div class="t" style="left:637px;width:60px;text-align:right;top:772.00px;font-size:12px;color:#0000ff;transform:scaleX(0.96);transform-origin:right 0;"><u>0</u></div>
<div class="t" style="left:712px;width:60px;text-align:right;top:772.00px;font-size:12px;color:#000;transform:scaleX(0.96);transform-origin:right 0;">0.00%</div>
<div class="t" style="left:-3px;width:80px;text-align:right;top:796.00px;font-size:12px;color:#000;transform:scaleX(0.96);transform-origin:right 0;">21</div>
<div class="t" style="left:92px;width:60px;text-align:right;top:796.00px;font-size:12px;color:#000;transform:scaleX(0.96);transform-origin:right 0;">0</div>
<div class="t" style="left:177px;width:60px;text-align:right;top:796.00px;font-size:12px;color:#0000ff;transform:scaleX(0.96);transform-origin:right 0;"><u>0</u></div>
<div class="t" style="left:242px;width:60px;text-align:right;top:796.00px;font-size:12px;color:#0000ff;transform:scaleX(0.96);transform-origin:right 0;"><u>0</u></div>
<div class="t" style="left:327px;width:60px;text-align:right;top:796.00px;font-size:12px;color:#0000ff;transform:scaleX(0.96);transform-origin:right 0;"><u>0</u></div>
<div class="t" style="left:402px;width:60px;text-align:right;top:796.00px;font-size:12px;color:#0000ff;transform:scaleX(0.96);transform-origin:right 0;"><u>0</u></div>
<div class="t" style="left:477px;width:60px;text-align:right;top:796.00px;font-size:12px;color:#0000ff;transform:scaleX(0.96);transform-origin:right 0;"><u>0</u></div>
<div class="t" style="left:562px;width:60px;text-align:right;top:796.00px;font-size:12px;color:#0000ff;transform:scaleX(0.96);transform-origin:right 0;"><u>0</u></div>
<div class="t" style="left:637px;width:60px;text-align:right;top:796.00px;font-size:12px;color:#0000ff;transform:scaleX(0.96);transform-origin:right 0;"><u>0</u></div>
<div class="t" style="left:712px;width:60px;text-align:right;top:796.00px;font-size:12px;color:#000;transform:scaleX(0.96);transform-origin:right 0;">0.00%</div>
<div class="t" style="left:-3px;width:80px;text-align:right;top:820.00px;font-size:12px;color:#000;transform:scaleX(0.96);transform-origin:right 0;">22</div>
<div class="t" style="left:92px;width:60px;text-align:right;top:820.00px;font-size:12px;color:#000;transform:scaleX(0.96);transform-origin:right 0;">0</div>
<div class="t" style="left:177px;width:60px;text-align:right;top:820.00px;font-size:12px;color:#0000ff;transform:scaleX(0.96);transform-origin:right 0;"><u>0</u></div>
<div class="t" style="left:242px;width:60px;text-align:right;top:820.00px;font-size:12px;color:#0000ff;transform:scaleX(0.96);transform-origin:right 0;"><u>0</u></div>
<div class="t" style="left:327px;width:60px;text-align:right;top:820.00px;font-size:12px;color:#0000ff;transform:scaleX(0.96);transform-origin:right 0;"><u>0</u></div>
<div class="t" style="left:402px;width:60px;text-align:right;top:820.00px;font-size:12px;color:#0000ff;transform:scaleX(0.96);transform-origin:right 0;"><u>0</u></div>
<div class="t" style="left:477px;width:60px;text-align:right;top:820.00px;font-size:12px;color:#0000ff;transform:scaleX(0.96);transform-origin:right 0;"><u>0</u></div>
<div class="t" style="left:562px;width:60px;text-align:right;top:820.00px;font-size:12px;color:#0000ff;transform:scaleX(0.96);transform-origin:right 0;"><u>0</u></div>
<div class="t" style="left:637px;width:60px;text-align:right;top:820.00px;font-size:12px;color:#0000ff;transform:scaleX(0.96);transform-origin:right 0;"><u>0</u></div>
<div class="t" style="left:712px;width:60px;text-align:right;top:820.00px;font-size:12px;color:#000;transform:scaleX(0.96);transform-origin:right 0;">0.00%</div>
<div class="t" style="left:-3px;width:80px;text-align:right;top:844.00px;font-size:12px;color:#000;transform:scaleX(0.96);transform-origin:right 0;">23</div>
<div class="t" style="left:92px;width:60px;text-align:right;top:844.00px;font-size:12px;color:#000;transform:scaleX(0.96);transform-origin:right 0;">0</div>
<div class="t" style="left:177px;width:60px;text-align:right;top:844.00px;font-size:12px;color:#0000ff;transform:scaleX(0.96);transform-origin:right 0;"><u>0</u></div>
<div class="t" style="left:242px;width:60px;text-align:right;top:844.00px;font-size:12px;color:#0000ff;transform:scaleX(0.96);transform-origin:right 0;"><u>0</u></div>
<div class="t" style="left:327px;width:60px;text-align:right;top:844.00px;font-size:12px;color:#0000ff;transform:scaleX(0.96);transform-origin:right 0;"><u>0</u></div>
<div class="t" style="left:402px;width:60px;text-align:right;top:844.00px;font-size:12px;color:#0000ff;transform:scaleX(0.96);transform-origin:right 0;"><u>14</u></div>
<div class="t" style="left:477px;width:60px;text-align:right;top:844.00px;font-size:12px;color:#0000ff;transform:scaleX(0.96);transform-origin:right 0;"><u>0</u></div>
<div class="t" style="left:562px;width:60px;text-align:right;top:844.00px;font-size:12px;color:#0000ff;transform:scaleX(0.96);transform-origin:right 0;"><u>0</u></div>
<div class="t" style="left:637px;width:60px;text-align:right;top:844.00px;font-size:12px;color:#0000ff;transform:scaleX(0.96);transform-origin:right 0;"><u>0</u></div>
<div class="t" style="left:712px;width:60px;text-align:right;top:844.00px;font-size:12px;color:#000;transform:scaleX(0.96);transform-origin:right 0;">0.00%</div>
<div class="t" style="left:-3px;width:80px;text-align:right;top:868.00px;font-size:12px;color:#000;transform:scaleX(0.96);transform-origin:right 0;">24</div>
<div class="t" style="left:92px;width:60px;text-align:right;top:868.00px;font-size:12px;color:#000;transform:scaleX(0.96);transform-origin:right 0;">0</div>
<div class="t" style="left:177px;width:60px;text-align:right;top:868.00px;font-size:12px;color:#0000ff;transform:scaleX(0.96);transform-origin:right 0;"><u>0</u></div>
<div class="t" style="left:242px;width:60px;text-align:right;top:868.00px;font-size:12px;color:#0000ff;transform:scaleX(0.96);transform-origin:right 0;"><u>0</u></div>
<div class="t" style="left:327px;width:60px;text-align:right;top:868.00px;font-size:12px;color:#0000ff;transform:scaleX(0.96);transform-origin:right 0;"><u>0</u></div>
<div class="t" style="left:402px;width:60px;text-align:right;top:868.00px;font-size:12px;color:#0000ff;transform:scaleX(0.96);transform-origin:right 0;"><u>0</u></div>
<div class="t" style="left:477px;width:60px;text-align:right;top:868.00px;font-size:12px;color:#0000ff;transform:scaleX(0.96);transform-origin:right 0;"><u>0</u></div>
<div class="t" style="left:562px;width:60px;text-align:right;top:868.00px;font-size:12px;color:#0000ff;transform:scaleX(0.96);transform-origin:right 0;"><u>0</u></div>
<div class="t" style="left:637px;width:60px;text-align:right;top:868.00px;font-size:12px;color:#0000ff;transform:scaleX(0.96);transform-origin:right 0;"><u>0</u></div>
<div class="t" style="left:712px;width:60px;text-align:right;top:868.00px;font-size:12px;color:#000;transform:scaleX(0.96);transform-origin:right 0;">0.00%</div></body></html>
